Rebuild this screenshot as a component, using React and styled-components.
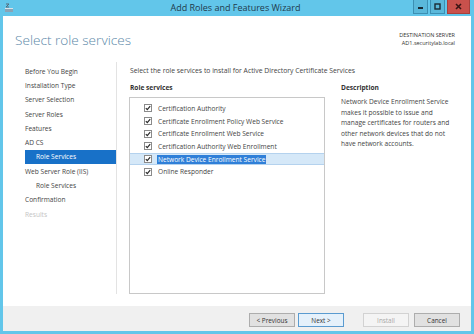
import React from 'react';
import styled, { createGlobalStyle } from 'styled-components';

const GlobalStyle = createGlobalStyle`
	html, body {
		margin: 0;
		padding: 0;
		background: #62c6ea;
	}
	* {
		box-sizing: border-box;
	}
`;

const Window = styled.div`
	width: 474px;
	height: 334px;
	display: flex;
	flex-direction: column;
	background-color: #62c6ea;
	padding: 0 3px 3px 3px;
	font-family: 'Open Sans', 'Liberation Sans', sans-serif;
	color: #333;
	overflow: hidden;
`;

const TitleBar = styled.div`
	height: 16px;
	flex-shrink: 0;
	display: flex;
	align-items: flex-start;
`;

const AppIcon = styled.div`
	width: 10px;
	height: 10px;
	margin-top: 3px;
	margin-left: 1px;
	display: flex;
`;

const TitleText = styled.div`
	flex: 1;
	text-align: center;
	font-size: 9px;
	line-height: 15px;
	color: #1f3b4c;
	padding-left: 44px;
`;

const Controls = styled.div`
	display: flex;
	gap: 2px;
	margin-right: 1px;
`;

const ControlButton = styled.div`
	width: ${(p) => (p.$close ? '23px' : '15px')};
	height: 14px;
	display: flex;
	align-items: center;
	justify-content: center;
	background-color: ${(p) => (p.$close ? '#c9514c' : '#5ab8da')};
	border: 1px solid ${(p) => (p.$close ? '#a8403c' : '#3c8fb2')};
	border-top: none;
`;

const Body = styled.div`
	flex: 1;
	display: flex;
	flex-direction: column;
	background-color: #fff;
`;

const Header = styled.div`
	height: 46px;
	flex-shrink: 0;
	display: flex;
	justify-content: space-between;
	padding: 15px 16px 0 12px;
`;

const PageTitle = styled.div`
	font-size: 13.6px;
	font-weight: 300;
	color: #5b88a8;
	line-height: 18px;
`;

const Destination = styled.div`
	text-align: right;
	font-size: 5.5px;
	line-height: 8px;
	color: #333;
`;

const Main = styled.div`
	flex: 1;
	display: flex;
	padding-bottom: 12px;
`;

const Nav = styled.div`
	width: 114px;
	flex-shrink: 0;
	display: flex;
	flex-direction: column;
	padding: 2px 0 0 22px;
	border-right: 1px solid #e3e3e3;
`;

const NavItem = styled.div`
	height: 14.3px;
	display: flex;
	align-items: center;
	font-size: 6.6px;
	padding-left: ${(p) => (p.$sub ? '11px' : '0')};
	color: ${(p) => (p.$active ? '#fff' : p.$disabled ? '#c4c4c4' : '#444')};
	background-color: ${(p) => (p.$active ? '#1871c8' : 'transparent')};
`;

const Content = styled.div`
	flex: 1;
	display: flex;
	flex-direction: column;
	padding: 0 16px 0 12px;
`;

const Intro = styled.div`
	height: 16px;
	display: flex;
	align-items: center;
	font-size: 6.8px;
	color: #444;
	padding-left: 1px;
`;

const Columns = styled.div`
	flex: 1;
	display: flex;
	gap: 15px;
`;

const ListColumn = styled.div`
	width: 196px;
	display: flex;
	flex-direction: column;
`;

const SectionLabel = styled.div`
	height: 19px;
	display: flex;
	align-items: center;
	font-size: 6.6px;
	font-weight: 700;
	color: #333;
	padding-left: 1px;
`;

const ListBox = styled.div`
	flex: 1;
	border: 1px solid #c8c8c8;
	padding: 4px 0 0 0;
	display: flex;
	flex-direction: column;
`;

const ListRow = styled.div`
	height: 12.7px;
	display: flex;
	align-items: center;
	gap: 5px;
	padding-left: 14px;
	font-size: 6.6px;
	color: #444;
	background-color: ${(p) => (p.$selected ? '#d5e8f8' : 'transparent')};
	border-top: 1px solid ${(p) => (p.$selected ? '#b4d2ee' : 'transparent')};
	border-bottom: 1px solid ${(p) => (p.$selected ? '#b4d2ee' : 'transparent')};
`;

const RowLabel = styled.span`
	padding: 0 1px;
	color: ${(p) => (p.$selected ? '#fff' : '#444')};
	background-color: ${(p) => (p.$selected ? '#2f7fd8' : 'transparent')};
	line-height: 9px;
`;

const DescColumn = styled.div`
	flex: 1;
	display: flex;
	flex-direction: column;
`;

const DescText = styled.div`
	font-size: 6.6px;
	line-height: 10.5px;
	color: #444;
	padding-left: 1px;
`;

const Footer = styled.div`
	height: 25px;
	flex-shrink: 0;
	display: flex;
	justify-content: flex-end;
	align-items: flex-start;
	padding: 7px 11px 0 0;
	gap: 3px;
	background-color: #f0f0f0;
`;

const Button = styled.div`
	width: ${(p) => p.$w || '46px'};
	height: 14px;
	margin-left: ${(p) => p.$gapLeft || '0'};
	display: flex;
	align-items: center;
	justify-content: center;
	font-size: 6.4px;
	color: ${(p) => (p.$disabled ? '#a8a8a8' : '#333')};
	background-color: ${(p) => (p.$default ? '#e5f1fb' : p.$disabled ? '#f4f4f4' : '#e1e1e1')};
	border: 1px solid ${(p) => (p.$default ? '#5a9bd0' : p.$disabled ? '#d2d2d2' : '#adadad')};
`;

const Check = () => (
	<svg width="8" height="8" viewBox="0 0 8 8">
		<rect x="0.5" y="0.5" width="7" height="7" fill="#fff" stroke="#8a8a8a" />
		<path d="M1.8 4.1 L3.3 5.6 L6.2 2.2" fill="none" stroke="#2a2a2a" strokeWidth="1.2" />
	</svg>
);

const navItems = [
	{ label: 'Before You Begin' },
	{ label: 'Installation Type' },
	{ label: 'Server Selection' },
	{ label: 'Server Roles' },
	{ label: 'Features' },
	{ label: 'AD CS' },
	{ label: 'Role Services', sub: true, active: true },
	{ label: 'Web Server Role (IIS)' },
	{ label: 'Role Services', sub: true },
	{ label: 'Confirmation' },
	{ label: 'Results', disabled: true },
];

const services = [
	'Certification Authority',
	'Certificate Enrollment Policy Web Service',
	'Certificate Enrollment Web Service',
	'Certification Authority Web Enrollment',
	'Network Device Enrollment Service',
	'Online Responder',
];

const App = () => {
	return (
		<>
			<GlobalStyle />
			<Window>
				<TitleBar>
					<AppIcon>
						<svg width="10" height="10" viewBox="0 0 10 10">
							<rect x="1" y="5" width="8" height="4" fill="#8aa3b5" />
							<rect x="1" y="5" width="8" height="1" fill="#d9e4ea" />
							<path d="M2 1 L5 1 L2 4 L5 4" fill="none" stroke="#556b7a" strokeWidth="1" />
						</svg>
					</AppIcon>
					<TitleText>Add Roles and Features Wizard</TitleText>
					<Controls>
						<ControlButton>
							<svg width="7" height="7" viewBox="0 0 7 7">
								<rect x="1" y="4" width="5" height="2" fill="#1a2a33" />
							</svg>
						</ControlButton>
						<ControlButton>
							<svg width="7" height="7" viewBox="0 0 7 7">
								<rect x="1" y="1" width="5" height="5" fill="none" stroke="#1a2a33" strokeWidth="1.4" />
							</svg>
						</ControlButton>
						<ControlButton $close>
							<svg width="7" height="7" viewBox="0 0 7 7">
								<path d="M1 1 L6 6 M6 1 L1 6" stroke="#3a1414" strokeWidth="1.6" />
							</svg>
						</ControlButton>
					</Controls>
				</TitleBar>
				<Body>
					<Header>
						<PageTitle>Select role services</PageTitle>
						<Destination>
							<div>DESTINATION SERVER</div>
							<div>AD1.securitylab.local</div>
						</Destination>
					</Header>
					<Main>
						<Nav>
							{navItems.map((item, i) => (
								<NavItem
									key={i}
									$sub={item.sub}
									$active={item.active}
									$disabled={item.disabled}
								>
									{item.label}
								</NavItem>
							))}
						</Nav>
						<Content>
							<Intro>
								Select the role services to install for Active Directory Certificate Services
							</Intro>
							<Columns>
								<ListColumn>
									<SectionLabel>Role services</SectionLabel>
									<ListBox>
										{services.map((s, i) => (
											<ListRow key={s} $selected={i === 4}>
												<Check />
												<RowLabel $selected={i === 4}>{s}</RowLabel>
											</ListRow>
										))}
									</ListBox>
								</ListColumn>
								<DescColumn>
									<SectionLabel>Description</SectionLabel>
									<DescText>
										Network Device Enrollment Service
										<br />
										makes it possible to issue and
										<br />
										manage certificates for routers and
										<br />
										other network devices that do not
										<br />
										have network accounts.
									</DescText>
								</DescColumn>
							</Columns>
						</Content>
					</Main>
					<Footer>
						<Button>&lt; Previous</Button>
						<Button $default>Next &gt;</Button>
						<Button $disabled $gapLeft="16px">Install</Button>
						<Button $gapLeft="2px">Cancel</Button>
					</Footer>
				</Body>
			</Window>
		</>
	);
};

export default App;
